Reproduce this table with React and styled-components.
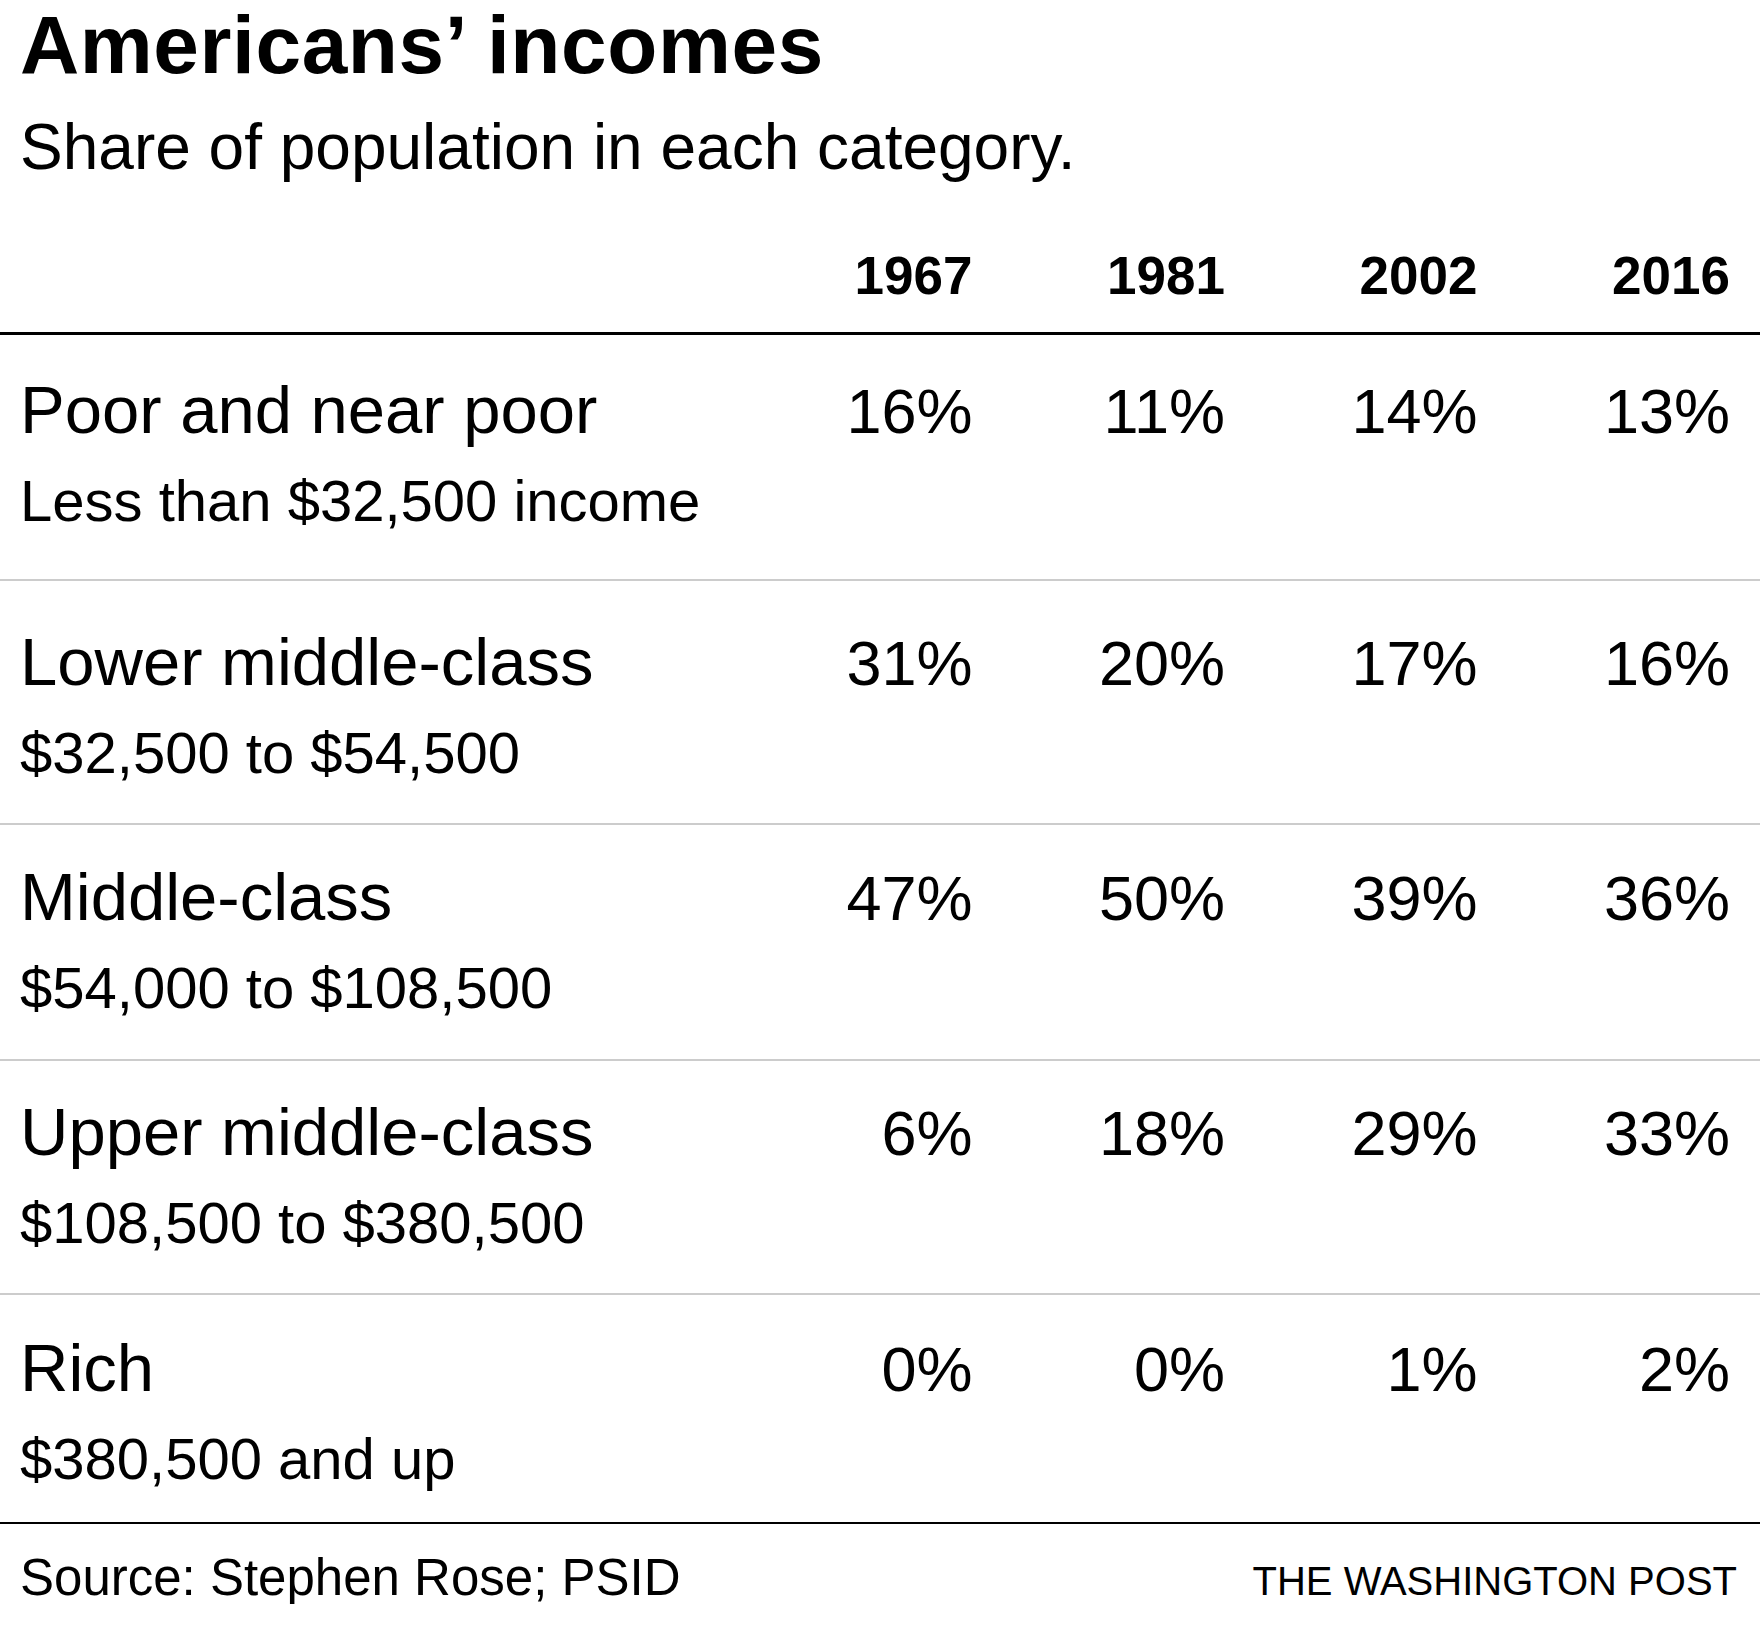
import React from 'react';
import styled, { createGlobalStyle } from 'styled-components';

const GlobalStyle = createGlobalStyle`
	html, body {
		margin: 0;
		padding: 0;
		background: #fff;
	}
	body {
		font-family: 'Liberation Sans', Arial, sans-serif;
		color: #000;
	}
`;

const Page = styled.div`
	width: 1760px;
	background: #fff;
`;

const Title = styled.h1`
	margin: 0;
	padding-left: 20px;
	font-size: 82px;
	line-height: 90px;
	font-weight: 700;
	letter-spacing: 0.6px;
`;

const Subtitle = styled.p`
	margin: 25px 0 0;
	padding-left: 20px;
	font-size: 64px;
	line-height: 64px;
	font-weight: 400;
`;

const Row = styled.div`
	display: grid;
	grid-template-columns: 1fr repeat(4, 252.5px);
	align-items: baseline;
	padding: 0 30px 0 20px;
`;

const HeaderRow = styled(Row)`
	margin-top: 70px;
	padding-bottom: 30px;
	border-bottom: 3px solid #000;
`;

const Year = styled.div`
	text-align: right;
	font-size: 53px;
	line-height: 53px;
	font-weight: 700;
`;

const DataRow = styled(Row)`
	padding-top: ${(props) => props.$top}px;
	padding-bottom: ${(props) => props.$bottom}px;
	border-bottom: ${(props) => (props.$last ? '2px solid #000' : '2px solid #ccc')};
`;

const LabelCell = styled.div`
	display: flex;
	flex-direction: column;
	gap: 30px;
`;

const Label = styled.div`
	font-size: 67px;
	line-height: 66px;
`;

const Range = styled.div`
	font-size: 58px;
	line-height: 56px;
`;

const Value = styled.div`
	text-align: right;
	font-size: 63px;
	line-height: 66px;
`;

const Footer = styled.div`
	display: flex;
	justify-content: space-between;
	align-items: baseline;
	padding: 28px 23px 0 20px;
`;

const Source = styled.div`
	font-size: 51px;
	line-height: 52px;
`;

const Credit = styled.div`
	font-size: 40px;
	line-height: 40px;
	text-transform: uppercase;
`;

const years = ['1967', '1981', '2002', '2016'];

const rows = [
	{
		label: 'Poor and near poor',
		range: 'Less than $32,500 income',
		values: ['16%', '11%', '14%', '13%'],
		top: 42,
		bottom: 50
	},
	{
		label: 'Lower middle-class',
		range: '$32,500 to $54,500',
		values: ['31%', '20%', '17%', '16%'],
		top: 48,
		bottom: 42
	},
	{
		label: 'Middle-class',
		range: '$54,000 to $108,500',
		values: ['47%', '50%', '39%', '36%'],
		top: 39,
		bottom: 43
	},
	{
		label: 'Upper middle-class',
		range: '$108,500 to $380,500',
		values: ['6%', '18%', '29%', '33%'],
		top: 38,
		bottom: 42
	},
	{
		label: 'Rich',
		range: '$380,500 and up',
		values: ['0%', '0%', '1%', '2%'],
		top: 40,
		bottom: 35
	}
];

export default function App() {
	return (
		<Page>
			<GlobalStyle />
			<Title>Americans’ incomes</Title>
			<Subtitle>Share of population in each category.</Subtitle>
			<HeaderRow>
				<div />
				{years.map((year) => (
					<Year key={year}>{year}</Year>
				))}
			</HeaderRow>
			{rows.map((row, index) => (
				<DataRow
					key={row.label}
					$top={row.top}
					$bottom={row.bottom}
					$last={index === rows.length - 1}
				>
					<LabelCell>
						<Label>{row.label}</Label>
						<Range>{row.range}</Range>
					</LabelCell>
					{row.values.map((value, i) => (
						<Value key={i}>{value}</Value>
					))}
				</DataRow>
			))}
			<Footer>
				<Source>Source: Stephen Rose; PSID</Source>
				<Credit>The Washington Post</Credit>
			</Footer>
		</Page>
	);
}
